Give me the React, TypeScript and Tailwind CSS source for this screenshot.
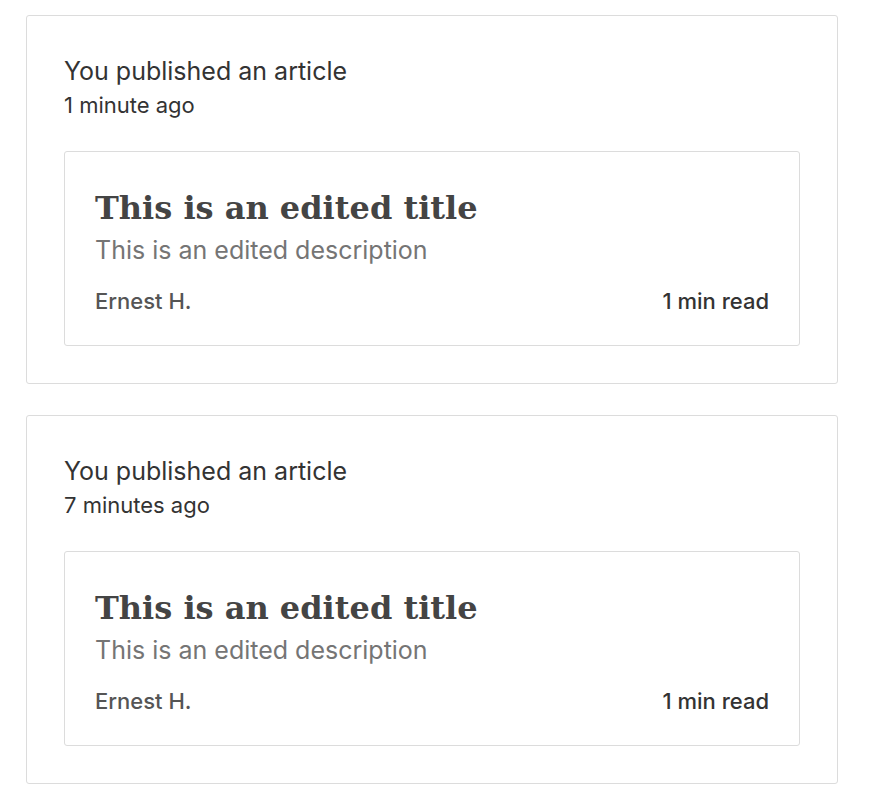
export default function App() {
  const items = [
    { time: '1 minute ago' },
    { time: '7 minutes ago' },
  ];

  return (
    <div className="min-h-screen bg-white pl-[26px] pt-[15px] font-['Inter','Liberation_Sans',Arial,sans-serif] text-[#333]">
      <div className="flex w-[812px] flex-col gap-[31px]">
        {items.map((item) => (
          <div
            key={item.time}
            className="rounded-[3px] border border-[#dcdcdc] px-[37px] pt-[38px] pb-[37px]"
          >
            <div className="text-[25px] leading-[34px] text-[#333]">You published an article</div>
            <div className="text-[22px] leading-[34px] text-[#333]">{item.time}</div>

            <div className="mt-[29px] rounded-[3px] border border-[#dcdcdc] px-[30px] pt-[32px] pb-[30px]">
              <h2 className="font-['DejaVu_Serif',Georgia,serif] text-[32px] font-bold leading-[48px] text-[#444]">
                This is an edited title
              </h2>
              <p className="text-[25px] leading-[36px] text-[#757575]">This is an edited description</p>
              <div className="mt-[19px] flex items-center justify-between text-[22px] leading-[28px] font-medium">
                <span className="text-[#555]">Ernest H.</span>
                <span className="text-[#333]">1 min read</span>
              </div>
            </div>
          </div>
        ))}
      </div>
    </div>
  );
}
